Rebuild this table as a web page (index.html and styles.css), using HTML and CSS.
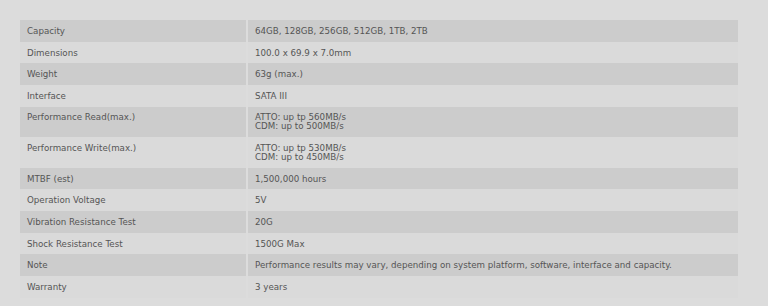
FILE: index.html
```html
<!DOCTYPE html>
<html lang="en">
<head>
<meta charset="utf-8">
<title>Specifications</title>
<link rel="stylesheet" href="styles.css">
</head>
<body>
<div class="specs">
  <div class="row shade"><div class="label">Capacity</div><div class="value">64GB, 128GB, 256GB, 512GB, 1TB, 2TB</div></div>
  <div class="row"><div class="label">Dimensions</div><div class="value">100.0 x 69.9 x 7.0mm</div></div>
  <div class="row shade"><div class="label">Weight</div><div class="value">63g (max.)</div></div>
  <div class="row"><div class="label">Interface</div><div class="value">SATA III</div></div>
  <div class="row shade"><div class="label">Performance Read(max.)</div><div class="value">ATTO: up tp 560MB/s<br>CDM: up to 500MB/s</div></div>
  <div class="row"><div class="label">Performance Write(max.)</div><div class="value">ATTO: up tp 530MB/s<br>CDM: up to 450MB/s</div></div>
  <div class="row shade"><div class="label">MTBF (est)</div><div class="value">1,500,000 hours</div></div>
  <div class="row"><div class="label">Operation Voltage</div><div class="value">5V</div></div>
  <div class="row shade"><div class="label">Vibration Resistance Test</div><div class="value">20G</div></div>
  <div class="row"><div class="label">Shock Resistance Test</div><div class="value">1500G Max</div></div>
  <div class="row shade"><div class="label">Note</div><div class="value">Performance results may vary, depending on system platform, software, interface and capacity.</div></div>
  <div class="row"><div class="label">Warranty</div><div class="value">3 years</div></div>
</div>
</body>
</html>
```
FILE: styles.css
```css
html, body {
  margin: 0;
  padding: 0;
  background: #dcdcdc;
}
body {
  font-family: "DejaVu Sans", Verdana, sans-serif;
  font-size: 8.7px;
  line-height: 9px;
  color: #555555;
}
.specs {
  width: 718px;
  margin: 20px 0 0 20px;
  display: flex;
  flex-direction: column;
}
.row {
  display: grid;
  grid-template-columns: 226px 1fr;
  column-gap: 2px;
}
.label, .value {
  padding: 6.9px 7px 5.76px;
  background: #dadada;
}
.shade .label, .shade .value {
  background: #cccccc;
}
```
